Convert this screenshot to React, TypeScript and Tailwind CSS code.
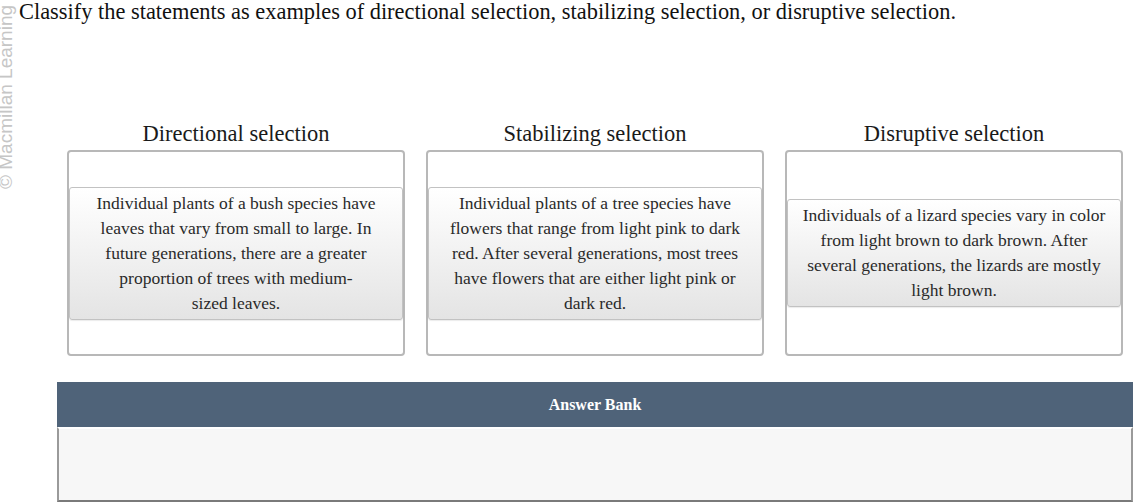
import React from "react";

interface Column {
  title: string;
  card: React.ReactNode;
}

const columns: Column[] = [
  {
    title: "Directional selection",
    card: (
      <>
        Individual plants of a bush species have leaves that vary from small to large. In future generations, there are a greater proportion of trees with medium-
        <br />
        sized leaves.
      </>
    ),
  },
  {
    title: "Stabilizing selection",
    card: "Individual plants of a tree species have flowers that range from light pink to dark red. After several generations, most trees have flowers that are either light pink or dark red.",
  },
  {
    title: "Disruptive selection",
    card: "Individuals of a lizard species vary in color from light brown to dark brown. After several generations, the lizards are mostly light brown.",
  },
];

const serif = { fontFamily: '"Liberation Serif", "Times New Roman", serif' };

function App() {
  return (
    <div className="relative w-[1141px] h-[504px] overflow-hidden bg-white text-[#222]" style={serif}>
      {/* watermark on the left edge, reads bottom to top */}
      <div className="absolute left-[-94px] top-[82px] w-[200px] h-[14px] -rotate-90 text-left text-[19px] leading-[14px] text-[#c6c6c6] whitespace-nowrap font-['Liberation_Sans',Arial,sans-serif]">
        © Macmillan Learning
      </div>

      <h1 className="pl-[19px] text-[22.4px] leading-[24px] text-[#111]">
        Classify the statements as examples of directional selection, stabilizing selection, or disruptive selection.
      </h1>

      <div className="ml-[67px] mt-[97px] w-[1056px] grid grid-cols-3 gap-[21px]">
        {columns.map((col) => (
          <div key={col.title} className="flex flex-col">
            <h2 className="text-center text-[22.5px] leading-[26px] mb-[3px] text-[#1a1a1a]">{col.title}</h2>
            <div className="h-[206px] border-2 border-[#b8b8b8] rounded-[4px] flex items-center">
              <div className="w-full border border-[#c2c2c2] rounded-[3px] bg-linear-to-b from-white to-[#e4e4e4] px-[14px] py-[3px] text-center text-[17.5px] leading-[25px] text-[#2a2a2a] shadow-[0_1px_1px_rgba(0,0,0,0.08)]">
                {col.card}
              </div>
            </div>
          </div>
        ))}
      </div>

      <div className="ml-[57px] mt-[26px] w-[1076px]">
        <div className="h-[45px] bg-[#4f6379] flex items-center justify-center text-white text-[16px] font-semibold">
          Answer Bank
        </div>
        <div className="h-[75px] border-t-2 border-t-white bg-[#f7f7f7] border-x-2 border-b-2 border-x-[#9a9a9a] border-b-[#7a7a7a]" />
      </div>
    </div>
  );
}

export default App;
